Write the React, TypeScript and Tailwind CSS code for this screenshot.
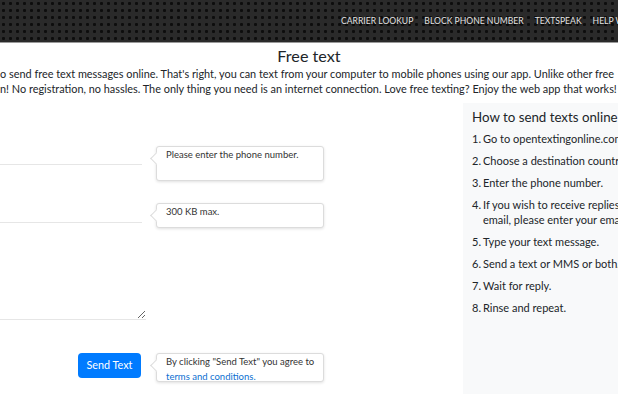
import React from "react";

function Tip({ children, h, arrowTop = 7 }: { children: React.ReactNode; h: string; arrowTop?: number }) {
  return (
    <div className={`relative w-[168px] ${h} bg-white border border-[#dcdcdc] rounded-[3px] shadow-[0_1px_3px_rgba(0,0,0,0.12)] pl-[9px] pr-[4px] text-[9.5px] leading-[15px] text-[#333] whitespace-nowrap`}>
      <span
        className="absolute left-[-5px] w-[9px] h-[9px] bg-white border-l border-b border-[#dcdcdc] rotate-45"
        style={{ top: arrowTop }}
      />
      {children}
    </div>
  );
}

const steps: React.ReactNode[] = [
  "Go to opentextingonline.com",
  "Choose a destination country.",
  "Enter the phone number.",
  <>
    If you wish to receive replies via
    <br />
    email, please enter your email.
  </>,
  "Type your text message.",
  "Send a text or MMS or both.",
  "Wait for reply.",
  "Rinse and repeat.",
];

export default function App() {
  return (
    <div className="w-[618px] h-[394px] overflow-hidden bg-white font-['Lato',sans-serif] text-[#212529]">
      <header className="h-[43px] bg-[#2a2a2a] bg-[radial-gradient(circle,#0d0d0d_1.3px,transparent_1.8px)] bg-size-[7px_7px] border-b border-[#9a9a9a] flex items-center overflow-hidden">
        <nav className="flex gap-[11px] pl-[341px] pt-[1px] whitespace-nowrap text-[8.6px] text-[#e2e2e2] [text-shadow:0_1px_2px_#000]">
          <span>CARRIER LOOKUP</span>
          <span>BLOCK PHONE NUMBER</span>
          <span>TEXTSPEAK</span>
          <span>HELP WITH TEXTING</span>
        </nav>
      </header>

      <main>
        <h1 className="text-center text-[16.2px] leading-[22px] mt-[2px]">Free text</h1>
        <div className="whitespace-nowrap text-[10.9px] leading-[15px] -mt-[1px]">
          <div>o send free text messages online. That's right, you can text from your computer to mobile phones using our app. Unlike other free</div>
          <div>n! No registration, no hassles. The only thing you need is an internet connection. Love free texting? Enjoy the web app that works!</div>
        </div>

        <div className="flex mt-[7px]">
          <form className="w-[463px] shrink-0 flex flex-col" onSubmit={(e) => e.preventDefault()}>
            <div className="flex items-start gap-[14px] mt-[43px]">
              <div className="w-[142px] h-[19px] border-b border-[#e6e6e6]" />
              <Tip h="h-[35px]">Please enter the phone number.</Tip>
            </div>
            <div className="flex items-start gap-[14px] mt-[22px]">
              <div className="w-[142px] h-[20px] border-b border-[#e6e6e6]" />
              <Tip h="h-[25px]">300 KB max.</Tip>
            </div>
            <textarea className="mt-[12px] w-[146px] h-[80px] border-0 border-b border-[#e6e6e6] outline-none resize-y" />
            <div className="flex items-start gap-[15px] mt-[33px]">
              <button className="ml-[78px] w-[63px] h-[25px] rounded-[4px] bg-[#007bff] text-white text-[10.8px]">Send Text</button>
              <Tip h="h-[29px]">
                By clicking "Send Text" you agree to
                <br />
                <a className="text-[#0c6fd1]">terms and conditions.</a>
              </Tip>
            </div>
          </form>

          <aside className="w-[240px] shrink-0 h-[300px] bg-[#f8f9fa] pl-[9px] pt-[4px]">
            <h2 className="text-[13.3px] leading-[20px] whitespace-nowrap">How to send texts online</h2>
            <ol className="mt-[4px] text-[11px] leading-[15px] whitespace-nowrap">
              {steps.map((s, i) => (
                <li key={i} className="flex mb-[7px]">
                  <span className="w-[11px] shrink-0">{i + 1}.</span>
                  <span>{s}</span>
                </li>
              ))}
            </ol>
          </aside>
        </div>
      </main>
    </div>
  );
}
